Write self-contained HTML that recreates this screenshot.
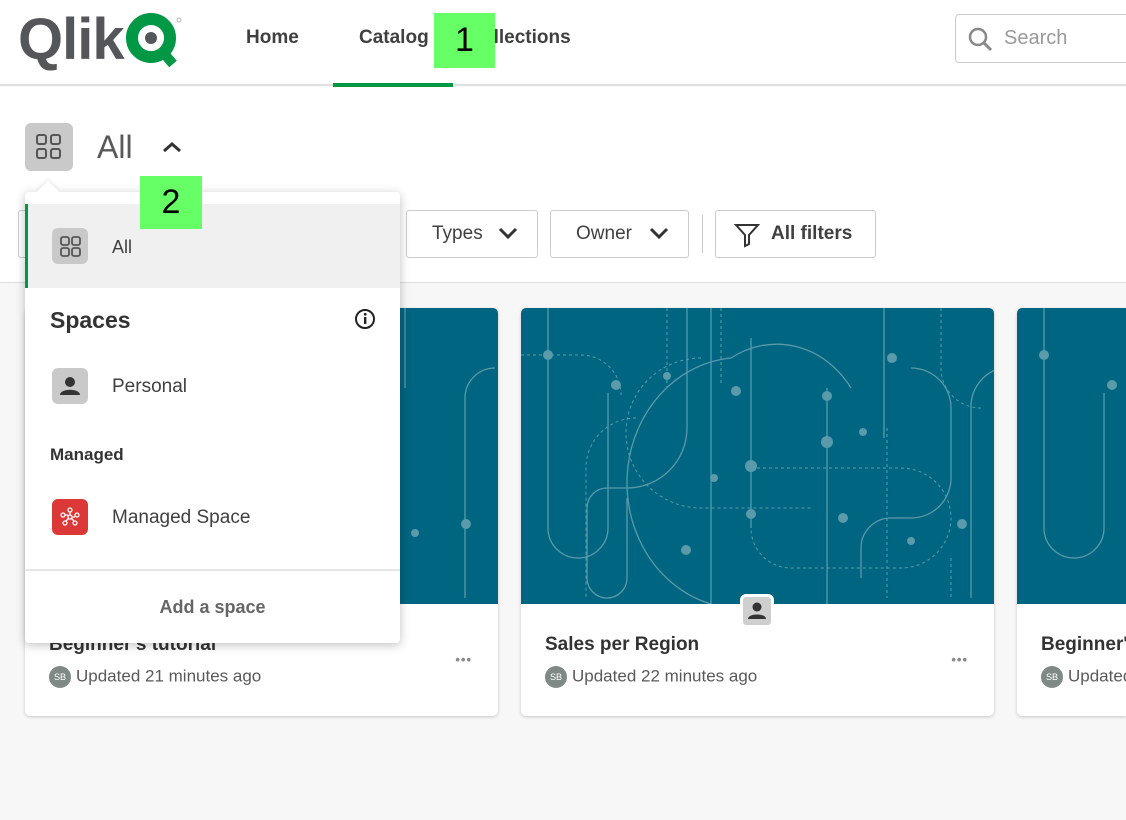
<!DOCTYPE html>
<html style="overflow:hidden;width:1126px;height:820px"><head><meta charset="utf-8"><style>
*{box-sizing:border-box;margin:0;padding:0}
body{width:1126px;height:820px;overflow:hidden;background:#f7f7f7;font-family:"Liberation Sans",sans-serif;color:#404040;position:relative}
#wrap{position:absolute;left:0;top:0;width:1126px;height:820px;overflow:hidden}
.hdr{position:absolute;left:0;top:0;width:1126px;height:86px;background:#fff;border-bottom:2px solid #e0e0e0}
.nav{position:absolute;top:27px;font-size:19px;font-weight:bold;color:#404040}
.top{position:absolute;left:0;top:87px;width:1126px;height:196px;background:#fff;border-bottom:1px solid #ddd}
.btn{position:absolute;top:210px;height:48px;border:1px solid #ccc;border-radius:3px;background:#fff;font-size:19px;color:#404040;padding:12px 0 0 25px}
.card{position:absolute;top:308px;width:473px;height:408px;background:#fff;border-radius:5px;box-shadow:0 1px 3px rgba(0,0,0,.2);overflow:hidden}
.card svg{display:block}
.ct{position:absolute;left:24px;top:326px;font-size:19px;font-weight:bold;color:#333}
.cu{position:absolute;left:24px;top:358px;font-size:17px;color:#595959}
.av{display:inline-block;width:22px;height:22px;border-radius:50%;background:#7f8a87;color:#fff;font-size:9px;text-align:center;line-height:22px;vertical-align:middle;margin-right:5px}
.dots{position:absolute;right:26px;top:344px;font-size:13px;color:#888;letter-spacing:1px;font-weight:bold}
.dd{position:absolute;left:25px;top:192px;width:375px;height:451px;background:#fff;border-radius:4px;box-shadow:0 2px 10px rgba(0,0,0,.25)}
.ico{position:absolute;width:36px;height:36px;border-radius:6px;background:#c9c9c9}
.lbl{position:absolute;background:#66ff66;color:#000;font-size:34px;text-align:center}
</style></head><body><div id="wrap">
<div class="hdr">
 <div style="position:absolute;left:18px;top:10px;font-size:58px;font-weight:bold;color:#54565a;letter-spacing:-1px;line-height:60px">Qlik</div>
 <svg style="position:absolute;left:115px;top:12px" width="72" height="56"><circle cx="36" cy="26" r="19" fill="none" stroke="#009845" stroke-width="12"/><circle cx="36" cy="26" r="6" fill="#54565a"/><path d="M46 38 L58 52" stroke="#009845" stroke-width="10"/><circle cx="64" cy="8" r="2" fill="none" stroke="#999" stroke-width=".7"/></svg>
 <div class="nav" style="left:246px">Home</div>
 <div class="nav" style="left:359px">Catalog</div>
 <div class="nav" style="left:482px">ollections</div>
 <div style="position:absolute;left:333px;top:83px;width:120px;height:4px;background:#009845"></div>
 <div style="position:absolute;left:955px;top:14px;width:200px;height:49px;border:1px solid #ccc;border-radius:4px;font-size:20px;color:#999;padding:12px 0 0 48px">Search
  <svg style="position:absolute;left:10px;top:10px" width="28" height="28"><circle cx="12" cy="12" r="8" fill="none" stroke="#888" stroke-width="2.5"/><path d="M18 18l7 7" stroke="#888" stroke-width="3"/></svg></div>
</div>
<div class="lbl" style="left:434px;top:13px;width:61px;height:55px;line-height:55px">1</div>
<div class="top">
 <div class="ico" style="left:25px;top:36px;width:48px;height:48px;border-radius:6px"></div>
 <svg style="position:absolute;left:35px;top:46px" width="28" height="28" fill="none" stroke="#555" stroke-width="2"><rect x="2" y="2" width="9" height="9" rx="2"/><rect x="16" y="2" width="9" height="9" rx="2"/><rect x="2" y="16" width="9" height="9" rx="2"/><rect x="16" y="16" width="9" height="9" rx="2"/></svg>
 <div style="position:absolute;left:97px;top:42px;font-size:32px;color:#595959">All</div>
 <svg style="position:absolute;left:160px;top:52px" width="24" height="16"><path d="M4 12l8-7 8 7" fill="none" stroke="#333" stroke-width="3"/></svg>
</div>
<div class="btn" style="left:18px;width:20px"></div>
<div class="btn" style="left:406px;width:132px">Types<svg style="position:absolute;left:90px;top:14px" width="22" height="16"><path d="M3 4l8 8 8-8" fill="none" stroke="#333" stroke-width="3"/></svg></div>
<div class="btn" style="left:550px;width:139px">Owner<svg style="position:absolute;left:97px;top:14px" width="22" height="16"><path d="M3 4l8 8 8-8" fill="none" stroke="#333" stroke-width="3"/></svg></div>
<div style="position:absolute;left:702px;top:215px;width:1px;height:38px;background:#ccc"></div>
<div class="btn" style="left:715px;width:161px;padding-left:55px;font-weight:bold">All filters<svg style="position:absolute;left:18px;top:11px" width="26" height="26"><path d="M2 3h22l-9 10v9l-4 2V13z" fill="none" stroke="#333" stroke-width="2"/></svg></div>

<div class="card" style="left:25px"><svg width="473" height="296"></svg><div class="ct">Beginner's tutorial</div><div class="cu"><span class="av">SB</span>Updated 21 minutes ago</div><div class="dots">•••</div></div>
<div class="card" style="left:521px"><svg width="473" height="296"><rect width="473" height="296" fill="#006580"/><g fill="none" stroke="#5a9aab" stroke-width="1.3"><path d="M27 0v220a30 30 0 0 0 60 0V85"/><path d="M166 0v120a60 60 0 0 1-60 60h-20a20 20 0 0 0-20 20v70a20 20 0 0 0 40 0v-80M190 0"/><path d="M230 30v190M306 80v216M363 0v130M390 60a40 40 0 0 1 40 40v70a40 40 0 0 1-40 40h-20a30 30 0 0 0-30 30v30"/><path d="M190 0v300"/><path d="M230 300a100 110 0 0 1 -20 -250a90 100 0 0 1 120 30"/><path d="M450 290V100a40 40 0 0 1 30-40"/></g><g fill="none" stroke="#5a9aab" stroke-dasharray="3 3"><path d="M0 47h60a40 40 0 0 1 40 40M146 0v80M200 0v75M180 50a70 70 0 0 0 0 150h110M230 160h150a40 40 0 0 1 0 100h-110a40 40 0 0 1-40-40M115 110a50 50 0 0 0-50 50v130M420 0v60a40 40 0 0 0 40 40M366 120v170M430 250v40"/></g><g fill="#5a9aab"><circle cx="27" cy="47" r="5"/><circle cx="95" cy="77" r="5"/><circle cx="146" cy="68" r="4"/><circle cx="215" cy="83" r="5"/><circle cx="306" cy="88" r="5"/><circle cx="306" cy="134" r="6"/><circle cx="230" cy="158" r="6"/><circle cx="193" cy="170" r="4"/><circle cx="230" cy="206" r="5"/><circle cx="165" cy="242" r="5"/><circle cx="322" cy="210" r="5"/><circle cx="390" cy="233" r="4"/><circle cx="371" cy="50" r="5"/><circle cx="342" cy="124" r="4"/><circle cx="441" cy="216" r="5"/></g></svg>
 <div style="position:absolute;left:219px;top:286px;width:34px;height:34px;border:3px solid #fff;border-radius:6px;background:#cfcfcf"><svg width="28" height="28"><circle cx="14" cy="10" r="4.5" fill="#333"/><path d="M5 22c0-6 18-6 18 0z" fill="#333"/></svg></div>
 <div class="ct">Sales per Region</div><div class="cu"><span class="av">SB</span>Updated 22 minutes ago</div><div class="dots">•••</div></div>
<div class="card" style="left:1017px;width:109px;border-radius:5px 0 0 5px"><svg width="109" height="296"><rect width="109" height="296" fill="#006580"/><g fill="none" stroke="#5a9aab" stroke-width="1.3"><path d="M27 0v220a30 30 0 0 0 60 0V85"/></g><g fill="#5a9aab"><circle cx="27" cy="47" r="5"/><circle cx="95" cy="77" r="5"/></g></svg><div class="ct" style="white-space:nowrap">Beginner's tutorial</div><div class="cu" style="white-space:nowrap"><span class="av">SB</span>Updated 21 minutes ago</div></div>
<svg style="position:absolute;left:25px;top:308px;border-radius:5px 5px 0 0" width="473" height="296"><rect width="473" height="296" fill="#006580"/><g fill="none" stroke="#5a9aab" stroke-width="1.3"><path d="M380 0v80M470 60a30 30 0 0 0-30 30v160M440 200v90"/></g><g fill="#5a9aab"><circle cx="441" cy="216" r="5"/><circle cx="390" cy="225" r="4"/></g></svg>

<div class="dd">
 <div style="position:absolute;left:0;top:12px;width:375px;height:84px;background:#f0f0f0;border-left:3px solid #009845"></div>
 <div class="ico" style="left:27px;top:36px"></div>
 <svg style="position:absolute;left:34px;top:43px" width="24" height="24" fill="none" stroke="#555" stroke-width="1.8"><rect x="2" y="2" width="8" height="8" rx="2"/><rect x="13" y="2" width="8" height="8" rx="2"/><rect x="2" y="13" width="8" height="8" rx="2"/><rect x="13" y="13" width="8" height="8" rx="2"/></svg>
 <div style="position:absolute;left:87px;top:45px;font-size:18px">All</div>
 <div style="position:absolute;left:25px;top:115px;font-size:23px;font-weight:bold;color:#333">Spaces</div>
 <svg style="position:absolute;left:329px;top:116px" width="22" height="22"><circle cx="11" cy="11" r="9" fill="none" stroke="#222" stroke-width="2"/><rect x="10" y="9" width="2.4" height="7" fill="#222"/><circle cx="11.2" cy="6.3" r="1.4" fill="#222"/></svg>
 <div class="ico" style="left:27px;top:176px"><svg width="36" height="36"><circle cx="18" cy="14" r="5" fill="#333"/><path d="M8 27c0-7 20-7 20 0z" fill="#333"/></svg></div>
 <div style="position:absolute;left:87px;top:184px;font-size:19px">Personal</div>
 <div style="position:absolute;left:25px;top:253px;font-size:17px;font-weight:bold;color:#333">Managed</div>
 <div class="ico" style="left:27px;top:307px;background:#dc3838"><svg width="36" height="36" fill="none" stroke="#fff" stroke-width="1.3"><circle cx="18" cy="11" r="2"/><circle cx="11" cy="16" r="2"/><circle cx="25" cy="16" r="2"/><circle cx="13" cy="24" r="2"/><circle cx="23" cy="24" r="2"/><circle cx="18" cy="18" r="2"/><path d="M18 13v3M13 16h3M20 18h3M14 22l3-3M22 22l-3-3"/></svg></div>
 <div style="position:absolute;left:87px;top:315px;font-size:19px">Managed Space</div>
 <div style="position:absolute;left:0;top:377px;width:375px;height:2px;background:#e6e6e6"></div>
 <div style="position:absolute;left:0;top:405px;width:375px;text-align:center;font-size:18px;font-weight:bold;color:#666">Add a space</div>
</div>
<div style="position:absolute;left:40px;top:184px;width:16px;height:16px;background:#fff;transform:rotate(45deg);box-shadow:-2px -2px 3px rgba(0,0,0,.06)"></div>
<div class="lbl" style="left:140px;top:176px;width:62px;height:53px;line-height:53px">2</div>
</div></body></html>
